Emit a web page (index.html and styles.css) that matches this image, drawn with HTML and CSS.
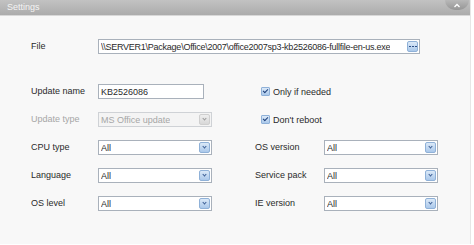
FILE: index.html
```html
<!DOCTYPE html>
<html lang="en">
<head>
    <meta charset="UTF-8">
    <title>Settings</title>
    <link rel="stylesheet" href="styles.css">
</head>
<body>

    <div class="panel">
        <div class="panel-head">
            <span class="panel-title">Settings</span>
            <button class="collapse-btn">
                <svg width="8" height="5" viewBox="0 0 8 5"><path d="M1.5 4 L4 1.5 L6.5 4" fill="none" stroke="#fff" stroke-width="1.3"/></svg>
            </button>
        </div>

        <div class="panel-body">
            <!-- File path row -->
            <div class="file-row">
                <label class="field-label">File</label>
                <div class="text-box file-box">
                    <span class="value path">\\SERVER1\Package\Office\2007\office2007sp3-kb2526086-fullfile-en-us.exe</span>
                    <span class="browse-btn"><i></i><i></i><i></i></span>
                </div>
            </div>

            <!-- Update fields -->
            <div class="form-grid">
                <label class="field-label">Update name</label>
                <div class="text-box name-box"><span class="value">KB2526086</span></div>
                <label class="check-label"><span class="check"></span>Only if needed</label>

                <label class="field-label disabled">Update type</label>
                <div class="text-box combo disabled"><span class="value">MS Office update</span><span class="drop-btn"></span></div>
                <label class="check-label"><span class="check"></span>Don't reboot</label>

                <label class="field-label">CPU type</label>
                <div class="text-box combo"><span class="value">All</span><span class="drop-btn"></span></div>
                <label class="field-label right">OS version</label>
                <div class="text-box combo"><span class="value">All</span><span class="drop-btn"></span></div>

                <label class="field-label">Language</label>
                <div class="text-box combo"><span class="value">All</span><span class="drop-btn"></span></div>
                <label class="field-label right">Service pack</label>
                <div class="text-box combo"><span class="value">All</span><span class="drop-btn"></span></div>

                <label class="field-label">OS level</label>
                <div class="text-box combo"><span class="value">All</span><span class="drop-btn"></span></div>
                <label class="field-label right">IE version</label>
                <div class="text-box combo"><span class="value">All</span><span class="drop-btn"></span></div>
            </div>
        </div>
    </div>

</body>
</html>
```

FILE: styles.css
```css
body {
    margin: 0;
    padding: 0;
    background: #ffffff;
    font-family: "Liberation Sans", Arial, sans-serif;
    font-size: 9px;
    color: #2a2a2a;
}

.panel {
    width: 471px;
    height: 244px;
    background: #f8f8f8;
    border-right: 1px solid #e6e6e6;
    box-sizing: border-box;
}

.panel-head {
    display: flex;
    justify-content: space-between;
    align-items: flex-start;
    height: 15px;
    background: linear-gradient(#c2c2c2, #acacac);
    border-bottom: 1px solid #d8d8d8;
    padding-left: 7px;
}

.panel-title {
    color: #f4f4f4;
    line-height: 15px;
}

.collapse-btn {
    width: 24px;
    height: 10px;
    margin-right: 1px;
    padding: 0;
    border: none;
    border-radius: 0 0 12px 12px;
    background: linear-gradient(#b8b8b8, #959595);
    display: flex;
    align-items: center;
    justify-content: center;
}

.panel-body {
    padding: 23px 0 0 31px;
}

.field-label {
    line-height: 15px;
    white-space: nowrap;
}

.field-label.disabled {
    color: #a6a6a6;
}

.file-row {
    display: flex;
    align-items: center;
    height: 15px;
}

.file-row .field-label {
    width: 67px;
}

.text-box {
    display: flex;
    align-items: center;
    justify-content: space-between;
    height: 15px;
    box-sizing: border-box;
    background: #fff;
    border: 1px solid #a9b1bb;
    padding: 0 1px 0 2px;
}

.value {
    white-space: nowrap;
    overflow: hidden;
}

.path {
    letter-spacing: -0.25px;
}

.text-box.disabled {
    background: #f4f4f4;
    border-color: #cfd2d6;
    color: #a6a6a6;
}

.file-box {
    width: 322px;
}

.browse-btn,
.drop-btn {
    flex: none;
    width: 11px;
    height: 11px;
    box-sizing: border-box;
    border: 1px solid #8fb1d8;
    border-radius: 2px;
    background: linear-gradient(#dbe9f8, #aac8ea);
}

.browse-btn {
    display: flex;
    align-items: center;
    justify-content: center;
    gap: 1px;
}

.browse-btn i {
    width: 2px;
    height: 1px;
    background: #2d4f86;
}

.drop-btn {
    position: relative;
}

.drop-btn::after {
    content: "";
    position: absolute;
    left: 3px;
    top: 2px;
    width: 2px;
    height: 2px;
    border-right: 1px solid #3d5f96;
    border-bottom: 1px solid #3d5f96;
    transform: rotate(45deg);
}

.disabled .drop-btn {
    border-color: #cfcfcf;
    background: linear-gradient(#eeeeee, #d8d8d8);
}

.disabled .drop-btn::after {
    border-color: #9a9a9a;
}

.form-grid {
    display: grid;
    grid-template-columns: 67px 114px 43px 69px 114px;
    grid-auto-rows: 15px;
    row-gap: 13px;
    margin-top: 30px;
    align-items: center;
}

.name-box {
    width: 106px;
}

.check-label {
    grid-column: 4 / span 2;
    display: flex;
    align-items: center;
    gap: 3px;
    padding-left: 6px;
    white-space: nowrap;
}

.check {
    width: 9px;
    height: 9px;
    box-sizing: border-box;
    border: 1px solid #8fb1d8;
    border-radius: 1px;
    background: linear-gradient(#dbe9f8, #aac8ea);
    position: relative;
}

.check::after {
    content: "";
    position: absolute;
    left: 2px;
    top: 0;
    width: 2px;
    height: 4px;
    border-right: 1.5px solid #1d3f7a;
    border-bottom: 1.5px solid #1d3f7a;
    transform: rotate(45deg);
}

.field-label.right {
    grid-column: 4;
}
```
